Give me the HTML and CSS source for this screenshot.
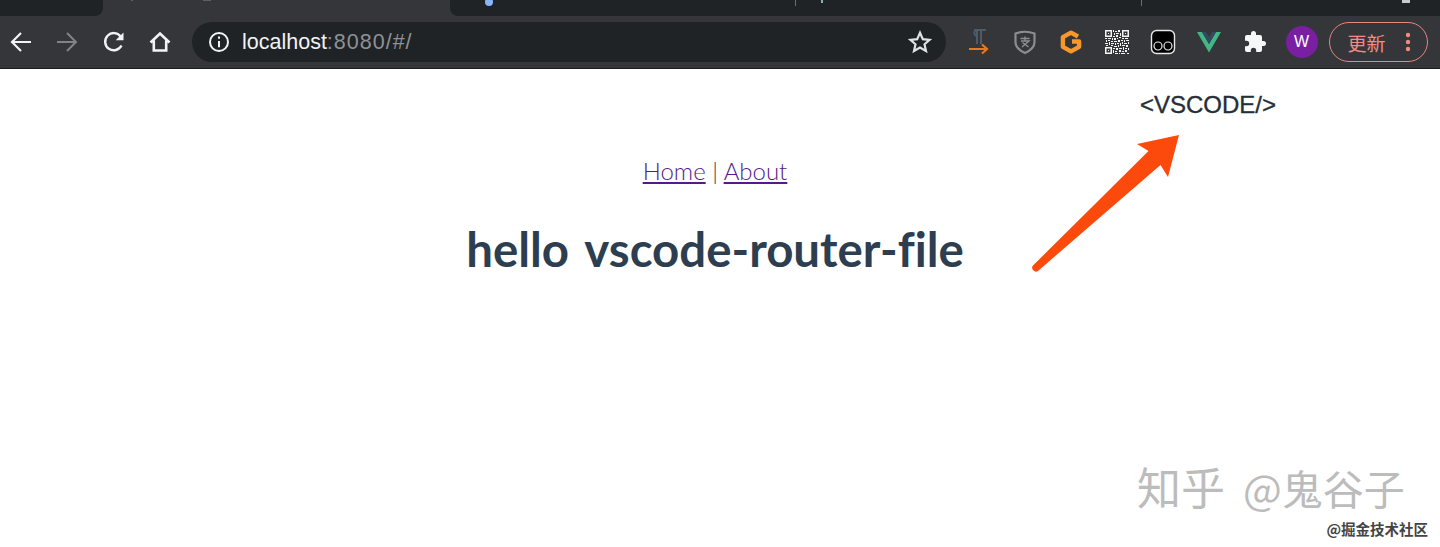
FILE: index.html
```html
<!DOCTYPE html>
<html lang="zh">
<head>
    <meta charset="UTF-8">
    <meta name="viewport" content="width=device-width, initial-scale=1.0">
    <title>hello vscode-router-file</title>
    <link rel="stylesheet" href="styles.css">
</head>
<body>
    <div class="browser">
        <div class="tabstrip">
            <div class="tab-side tab-left"></div>
            <div class="tab-active">
                <span class="tab-speck tab-speck-a"></span>
                <span class="tab-speck tab-speck-b"></span>
            </div>
            <div class="tab-side tab-right">
                <span class="tab-dot"></span>
                <span class="tab-sep tab-sep-a"></span>
                <span class="tab-speck tab-speck-c"></span>
                <span class="tab-sep tab-sep-b"></span>
                <span class="tab-speck tab-speck-d"></span>
            </div>
        </div>

        <div class="toolbar">
            <div class="nav-btns">
                <span class="nav-btn">
                    <svg width="24" height="24" viewBox="0 0 24 24" fill="none" stroke="#f1f3f4" stroke-width="2.2"><path d="M22 12H3M12 3l-9 9 9 9"/></svg>
                </span>
                <span class="nav-btn">
                    <svg width="24" height="24" viewBox="0 0 24 24" fill="none" stroke="#808487" stroke-width="2"><path d="M2 12h19M12 3l9 9-9 9"/></svg>
                </span>
                <span class="nav-btn">
                    <svg width="24" height="24" viewBox="0 0 24 24" fill="none" stroke="#f1f3f4" stroke-width="2.4"><path d="M19.5 15.5A8.6 8.6 0 1 1 18.6 6.4"/><path d="M21.5 2.5v7.8h-7.8z" fill="#f1f3f4" stroke="none"/></svg>
                </span>
                <span class="nav-btn">
                    <svg width="24" height="24" viewBox="0 0 24 24" fill="none" stroke="#f1f3f4" stroke-width="2.6"><path d="M2.500 12.500L12 3.500l9.500 9M5.800 10.500v10h12.400v-10"/></svg>
                </span>
            </div>

            <div class="omnibox">
                <svg class="info-icon" width="22" height="22" viewBox="0 0 22 22" fill="none" stroke="#f1f3f4" stroke-width="2"><circle cx="11" cy="11" r="9"/><path d="M11 10v6.2M11 5.6v2.2"/></svg>
                <span class="url">localhost<span class="url-rest">:8080/#/</span></span>
                <svg class="star-icon" width="24" height="24" viewBox="0 0 24 24" fill="none" stroke="#dfe1e3" stroke-width="2.200"><path d="M12 2.800l2.800 6.300 6.800.7-5.100 4.500 1.500 6.700-6-3.500-6 3.500 1.500-6.700-5.100-4.500 6.800-.7z"/></svg>
            </div>

            <div class="extensions">
                <span class="ext">
                    <svg width="26" height="26" viewBox="0 0 26 26" fill="none"><path d="M8 1h12M11 1c-3 0-4 5 0 6M11 1v14M15 1v14" stroke="#4d5a68" stroke-width="2"/><path d="M3 20h18M16 15.500l5 4.500-5 4.500" stroke="#e8781c" stroke-width="2.200"/></svg>
                </span>
                <span class="ext">
                    <svg width="24" height="26" viewBox="0 0 24 26" fill="none"><path d="M2.500 4.500C8 2.500 16 2.500 21.500 4.500V13c0 5-4 8.500-9.500 11C6.500 21.500 2.500 18 2.500 13z" fill="#35363a" stroke="#8b8d90" stroke-width="2.200"/><path d="M7.500 9.500h9M12 7.500v4M8 12h8l-7 6M9.500 13.500l6 4.500" stroke="#8b8d90" stroke-width="1.400"/></svg>
                </span>
                <span class="ext">
                    <svg width="26" height="26" viewBox="0 0 26 26" fill="none"><path d="M20 7.500L13 3.600 4.900 8.200v9.600l8.100 4.600 8.100-4.600v-5.300H14" stroke="#f7982a" stroke-width="4.400" stroke-linejoin="round"/></svg>
                </span>
                <span class="ext">
                    <svg width="24" height="24" viewBox="0 0 24 24" fill="#f4f4f4"><path d="M0 0h7v7H0zM17 0h7v7h-7zM0 17h7v7H0z"/><path d="M1.500 1.500h4v4h-4zM18.500 1.500h4v4h-4zM1.500 18.500h4v4h-4z" fill="#35363a"/><path d="M3 3h1v1H3zM20 3h1v1h-1zM3 20h1v1H3z"/><path d="M8 0h1v2H8zM10 1h2v1h-2zM13 0h2v2h-2zM9 3h1v2H9zM11 3h3v1h-3zM15 3h1v3h-1zM8 6h2v1H8zM11 5h2v2h-2zM14 7h2v1h-2zM0 8h2v1H0zM3 8h3v1H3zM7 8h1v2H7zM9 8h2v2H9zM12 8h1v1h-1zM17 8h2v1h-2zM20 8h3v1h-3zM1 10h1v2H1zM3 10h2v1H3zM6 11h2v1H6zM9 11h3v1H9zM13 10h2v2h-2zM16 10h2v1h-2zM19 10h1v2h-1zM21 10h3v1h-3zM0 13h3v1H0zM4 12h1v3H4zM6 13h3v1H6zM10 13h1v2h-1zM12 13h2v1h-2zM15 13h1v3h-1zM17 12h1v2h-1zM19 13h3v1h-3zM23 12h1v2h-1zM1 15h2v1H1zM6 15h2v1H6zM9 16h3v1H9zM13 15h1v2h-1zM17 15h3v1h-3zM21 15h2v2h-2zM8 18h2v1H8zM11 18h2v2h-2zM14 18h3v1h-3zM18 17h1v3h-1zM20 18h2v1h-2zM23 18h1v2h-1zM8 20h1v3H8zM10 21h2v1h-2zM14 20h2v2h-2zM17 21h2v1h-2zM20 20h2v2h-2zM10 23h3v1h-3zM14 23h1v1h-1zM16 23h4v1h-4zM22 23h2v1h-2z"/></svg>
                </span>
                <span class="ext">
                    <svg width="26" height="26" viewBox="0 0 26 26" fill="none"><rect x="1.500" y="1.500" width="23" height="23" rx="5" fill="#000" stroke="#e8e8e8" stroke-width="1.400"/><circle cx="8" cy="17" r="4" stroke="#e8e8e8" stroke-width="1.200"/><circle cx="18" cy="17" r="4" stroke="#e8e8e8" stroke-width="1.200"/></svg>
                </span>
                <span class="ext">
                    <svg width="24" height="22" viewBox="0 0 24 22"><path d="M0 1h5l7 12 7-12h5L12 21.500z" fill="#41b883"/><path d="M5 1h4l3 5 3-5h4l-7 12z" fill="#35495e"/></svg>
                </span>
                <span class="ext">
                    <svg width="24" height="24" viewBox="0 0 24 24" fill="#f6f7f8"><path d="M20.500 11H19V7a2 2 0 0 0-2-2h-4V3.500a2.500 2.500 0 0 0-5 0V5H4a2 2 0 0 0-2 2v3.800h1.500a2.700 2.700 0 0 1 0 5.400H2V20a2 2 0 0 0 2 2h3.800v-1.500a2.700 2.700 0 0 1 5.400 0V22H17a2 2 0 0 0 2-2v-4h1.500a2.500 2.500 0 0 0 0-5z"/></svg>
                </span>
                <span class="ext">
                    <span class="avatar">W</span>
                </span>
            </div>

            <div class="update-pill">
                <span class="update-label">更新</span>
                <svg width="6" height="20" viewBox="0 0 6 20" fill="#f28b82"><circle cx="3" cy="3" r="2.200"/><circle cx="3" cy="10" r="2.200"/><circle cx="3" cy="17" r="2.200"/></svg>
            </div>
        </div>

        <div class="page">
            <div class="vscode-row"><span class="vscode-tag">&lt;VSCODE/&gt;</span></div>
            <div class="nav-links"><a href="#/">Home</a> | <a href="#/about">About</a></div>
            <h1>hello vscode-router-file</h1>

            <svg class="arrow" width="160" height="150" viewBox="1030 130 160 150">
                <path d="M1179 135L1137 144 1148.500 151 1033.500 265a3.500 3.500 0 0 0 5 5.500L1160.500 165 1168 177z" fill="#fb4a0c"/>
            </svg>
            <div class="zhihu-mark">知乎<span class="zhihu-name">@鬼谷子</span></div>
            <div class="juejin-mark">@掘金技术社区</div>
        </div>
    </div>
</body>
</html>
```

FILE: styles.css
```css
html, body {
    margin: 0;
    height: 100%;
    overflow: hidden;
    background: #fff;
}
.browser {
    display: flex;
    flex-direction: column;
    height: 547px;
}
.tabstrip {
    display: flex;
    height: 16px;
    background: #35363a;
}
.tab-side {
    position: relative;
    height: 16px;
    background: #202326;
}
.tab-left {
    width: 103px;
    border-bottom-right-radius: 8px;
}
.tab-active {
    position: relative;
    width: 347px;
}
.tab-right {
    flex: 1;
    border-bottom-left-radius: 8px;
}
.tab-dot {
    position: absolute;
    left: 35px;
    top: -2px;
    width: 8px;
    height: 8px;
    border-radius: 50%;
    background: #8ab4f8;
}
.tab-sep {
    position: absolute;
    top: 0;
    width: 1px;
    height: 6px;
    background: #6b6e72;
}
.tab-sep-a {
    left: 345px;
}
.tab-sep-b {
    left: 691px;
}
.tab-speck {
    position: absolute;
    top: 0;
    width: 2px;
    height: 1px;
    background: #5c5f63;
}
.tab-speck-a {
    left: 28px;
}
.tab-speck-b {
    left: 100px;
    width: 8px;
}
.tab-speck-c {
    left: 371px;
    height: 3px;
    background: #7fb8b0;
}
.tab-speck-d {
    left: 952px;
    width: 8px;
    height: 3px;
    background: #c8cacc;
}
.toolbar {
    display: flex;
    align-items: center;
    height: 52px;
    background: #35363a;
    border-bottom: 1px solid #1d1e20;
}
.nav-btns {
    display: flex;
    margin-left: -2px;
}
.nav-btn {
    display: flex;
    align-items: center;
    justify-content: center;
    width: 46.33px;
    height: 40px;
}
.omnibox {
    display: flex;
    align-items: center;
    width: 754px;
    height: 40px;
    margin-left: 8.7px;
    background: #202326;
    border-radius: 20px;
    box-sizing: border-box;
    padding: 0 14px 0 15px;
    color: #f1f3f4;
}
.info-icon {
    margin-right: 12px;
    margin-left: 1px;
}
.url {
    flex: 1;
    font-family: "Liberation Sans", Arial, sans-serif;
    font-size: 21.5px;
    white-space: nowrap;
}
.url-rest {
    color: #8f9295;
    letter-spacing: 1px;
}
.extensions {
    display: flex;
    margin-left: 10px;
}
.ext {
    display: flex;
    align-items: center;
    justify-content: center;
    width: 46px;
    height: 40px;
}
.avatar {
    display: flex;
    align-items: center;
    justify-content: center;
    width: 32px;
    height: 32px;
    margin-left: 1px;
    border-radius: 50%;
    background: #7b1fa2;
    color: #fff;
    font-family: "Liberation Sans", Arial, sans-serif;
    font-size: 16px;
}
.update-pill {
    display: flex;
    align-items: center;
    justify-content: space-between;
    width: 99px;
    height: 40px;
    margin-left: 5px;
    box-sizing: border-box;
    padding: 0 16.5px 0 17.5px;
    border: 1.5px solid #e9857c;
    border-radius: 20px;
}
.update-label {
    font-family: "Noto Sans CJK SC", sans-serif;
    font-size: 19px;
    color: #f28b82;
}
.page {
    position: relative;
    flex: 1;
    background: #fff;
    color: #2c3e50;
    padding-right: 10px;
}
.vscode-row {
    display: flex;
    justify-content: flex-end;
    padding: 21px 154px 0 0;
}
.vscode-tag {
    font-family: "Liberation Sans", Arial, sans-serif;
    font-size: 24px;
    line-height: 30px;
    color: #262f38;
    -webkit-text-stroke: 0.35px #262f38;
}
.nav-links {
    margin-top: 36px;
    text-align: center;
    font-family: Lato, sans-serif;
    font-size: 24px;
    line-height: 30px;
    font-weight: 300;
}
.nav-links a {
    color: #551a8b;
}
h1 {
    margin: 33px 0 0;
    text-align: center;
    font-family: Lato, sans-serif;
    font-size: 47.4px;
    line-height: 60px;
    font-weight: 700;
    font-variant-ligatures: none;
    word-spacing: 5px;
}
.arrow {
    position: absolute;
    left: 1030px;
    top: 61px;
}
.zhihu-mark {
    position: absolute;
    left: 1137px;
    top: 390px;
    font-family: "Noto Sans CJK SC", sans-serif;
    font-size: 44px;
    line-height: 54px;
    color: #bcbcbc;
    text-shadow: 1px 1px 0 #fff;
    white-space: nowrap;
}
.zhihu-name {
    margin-left: 18px;
    font-size: 41px;
}
.juejin-mark {
    position: absolute;
    right: 12px;
    bottom: 8px;
    font-family: "Noto Sans CJK SC", sans-serif;
    font-size: 14.5px;
    line-height: 20px;
    font-weight: 700;
    color: #444;
}
```
